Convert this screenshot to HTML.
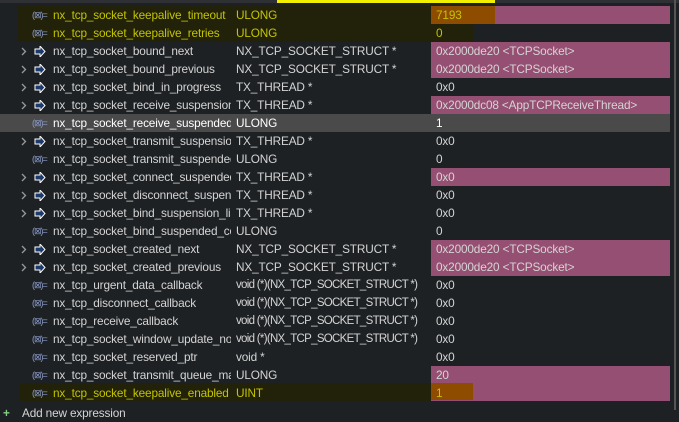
<!DOCTYPE html>
<html><head><meta charset="utf-8"><style>
body{margin:0;width:679px;height:410px;background:#1e2124;overflow:hidden;position:relative;font-family:"Liberation Sans",sans-serif;font-size:11.8px;letter-spacing:-0.15px;color:#d4d4d4}
.a{position:absolute}
.r{position:absolute;left:0;width:670px;height:18px;line-height:18px}
.n{position:absolute;left:53px;width:178px;overflow:hidden;white-space:nowrap}
.t{position:absolute;left:236px;white-space:nowrap;width:192px;overflow:hidden}
.v{position:absolute;left:436px;white-space:nowrap}
.c{position:absolute;left:21px;top:5px}
.ip{position:absolute;left:34px;top:4px}
.iv{position:absolute;left:32px;top:0;font-size:9px;color:#8a9ac8;letter-spacing:-1px}
.y{color:#c4c400}
.vd{letter-spacing:-0.7px;font-size:11.5px}
</style></head><body>
<div class="a" style="left:0;top:0;width:679px;height:3px;background:#2f3033"></div>
<div class="a" style="left:277px;top:0;width:218px;height:3px;background:#f0f000"></div>
<div class="a" style="left:674px;top:0;width:2px;height:410px;background:#555"></div>
<div class="a" style="left:431px;top:6px;width:239px;height:18px;background:#954f72"></div>
<div class="a" style="left:431px;top:42px;width:239px;height:36px;background:#954f72"></div>
<div class="a" style="left:431px;top:96px;width:239px;height:18px;background:#954f72"></div>
<div class="a" style="left:431px;top:168px;width:239px;height:18px;background:#954f72"></div>
<div class="a" style="left:431px;top:240px;width:239px;height:36px;background:#954f72"></div>
<div class="a" style="left:431px;top:366px;width:239px;height:35px;background:#954f72"></div>
<div class="a" style="left:0;top:114px;width:670px;height:18px;background:#4a4a4a"></div>
<div class="a" style="left:18px;top:6px;width:413px;height:36px;background:#22220a"></div>
<div class="a" style="left:431px;top:24px;width:42px;height:18px;background:#22220a"></div>
<div class="a" style="left:431px;top:6px;width:64px;height:18px;background:#8e4c00"></div>
<div class="a" style="left:20px;top:383px;width:411px;height:18px;background:#22220a"></div>
<div class="a" style="left:431px;top:383px;width:42px;height:17px;background:#8e4c00"></div>

<div class="r" style="top:6px"><span class="iv">(⊠)=</span><span class="n y">nx_tcp_socket_keepalive_timeout</span><span class="t y">ULONG</span><span class="v y">7193</span></div>
<div class="r" style="top:24px"><span class="iv">(⊠)=</span><span class="n y">nx_tcp_socket_keepalive_retries</span><span class="t y">ULONG</span><span class="v y">0</span></div>
<div class="r" style="top:42px"><svg class="c" width="6" height="9"><path d="M1 1l3.5 3.5L1 8" fill="none" stroke="#999" stroke-width="1.3"/></svg><svg class="ip" width="12" height="11"><path d="M1 3h5V0l5 5.5-5 5.5V8H1z" fill="#1e3a6a" stroke="#fff"/></svg><span class="n">nx_tcp_socket_bound_next</span><span class="t">NX_TCP_SOCKET_STRUCT *</span><span class="v">0x2000de20 &lt;TCPSocket&gt;</span></div>
<div class="r" style="top:60px"><svg class="c" width="6" height="9"><path d="M1 1l3.5 3.5L1 8" fill="none" stroke="#999" stroke-width="1.3"/></svg><svg class="ip" width="12" height="11"><path d="M1 3h5V0l5 5.5-5 5.5V8H1z" fill="#1e3a6a" stroke="#fff"/></svg><span class="n">nx_tcp_socket_bound_previous</span><span class="t">NX_TCP_SOCKET_STRUCT *</span><span class="v">0x2000de20 &lt;TCPSocket&gt;</span></div>
<div class="r" style="top:78px"><svg class="c" width="6" height="9"><path d="M1 1l3.5 3.5L1 8" fill="none" stroke="#999" stroke-width="1.3"/></svg><svg class="ip" width="12" height="11"><path d="M1 3h5V0l5 5.5-5 5.5V8H1z" fill="#1e3a6a" stroke="#fff"/></svg><span class="n">nx_tcp_socket_bind_in_progress</span><span class="t">TX_THREAD *</span><span class="v">0x0</span></div>
<div class="r" style="top:96px"><svg class="c" width="6" height="9"><path d="M1 1l3.5 3.5L1 8" fill="none" stroke="#999" stroke-width="1.3"/></svg><svg class="ip" width="12" height="11"><path d="M1 3h5V0l5 5.5-5 5.5V8H1z" fill="#1e3a6a" stroke="#fff"/></svg><span class="n">nx_tcp_socket_receive_suspension_list</span><span class="t">TX_THREAD *</span><span class="v">0x2000dc08 &lt;AppTCPReceiveThread&gt;</span></div>
<div class="r" style="top:114px;color:#fff"><span class="iv">(⊠)=</span><span class="n">nx_tcp_socket_receive_suspended</span><span class="t">ULONG</span><span class="v">1</span></div>
<div class="r" style="top:132px"><svg class="c" width="6" height="9"><path d="M1 1l3.5 3.5L1 8" fill="none" stroke="#999" stroke-width="1.3"/></svg><svg class="ip" width="12" height="11"><path d="M1 3h5V0l5 5.5-5 5.5V8H1z" fill="#1e3a6a" stroke="#fff"/></svg><span class="n">nx_tcp_socket_transmit_suspension_list</span><span class="t">TX_THREAD *</span><span class="v">0x0</span></div>
<div class="r" style="top:150px"><span class="iv">(⊠)=</span><span class="n">nx_tcp_socket_transmit_suspended</span><span class="t">ULONG</span><span class="v">0</span></div>
<div class="r" style="top:168px"><svg class="c" width="6" height="9"><path d="M1 1l3.5 3.5L1 8" fill="none" stroke="#999" stroke-width="1.3"/></svg><svg class="ip" width="12" height="11"><path d="M1 3h5V0l5 5.5-5 5.5V8H1z" fill="#1e3a6a" stroke="#fff"/></svg><span class="n">nx_tcp_socket_connect_suspended_thread</span><span class="t">TX_THREAD *</span><span class="v">0x0</span></div>
<div class="r" style="top:186px"><svg class="c" width="6" height="9"><path d="M1 1l3.5 3.5L1 8" fill="none" stroke="#999" stroke-width="1.3"/></svg><svg class="ip" width="12" height="11"><path d="M1 3h5V0l5 5.5-5 5.5V8H1z" fill="#1e3a6a" stroke="#fff"/></svg><span class="n">nx_tcp_socket_disconnect_suspended</span><span class="t">TX_THREAD *</span><span class="v">0x0</span></div>
<div class="r" style="top:204px"><svg class="c" width="6" height="9"><path d="M1 1l3.5 3.5L1 8" fill="none" stroke="#999" stroke-width="1.3"/></svg><svg class="ip" width="12" height="11"><path d="M1 3h5V0l5 5.5-5 5.5V8H1z" fill="#1e3a6a" stroke="#fff"/></svg><span class="n">nx_tcp_socket_bind_suspension_list</span><span class="t">TX_THREAD *</span><span class="v">0x0</span></div>
<div class="r" style="top:222px"><span class="iv">(⊠)=</span><span class="n">nx_tcp_socket_bind_suspended_count</span><span class="t">ULONG</span><span class="v">0</span></div>
<div class="r" style="top:240px"><svg class="c" width="6" height="9"><path d="M1 1l3.5 3.5L1 8" fill="none" stroke="#999" stroke-width="1.3"/></svg><svg class="ip" width="12" height="11"><path d="M1 3h5V0l5 5.5-5 5.5V8H1z" fill="#1e3a6a" stroke="#fff"/></svg><span class="n">nx_tcp_socket_created_next</span><span class="t">NX_TCP_SOCKET_STRUCT *</span><span class="v">0x2000de20 &lt;TCPSocket&gt;</span></div>
<div class="r" style="top:258px"><svg class="c" width="6" height="9"><path d="M1 1l3.5 3.5L1 8" fill="none" stroke="#999" stroke-width="1.3"/></svg><svg class="ip" width="12" height="11"><path d="M1 3h5V0l5 5.5-5 5.5V8H1z" fill="#1e3a6a" stroke="#fff"/></svg><span class="n">nx_tcp_socket_created_previous</span><span class="t">NX_TCP_SOCKET_STRUCT *</span><span class="v">0x2000de20 &lt;TCPSocket&gt;</span></div>
<div class="r" style="top:276px"><span class="iv">(⊠)=</span><span class="n">nx_tcp_urgent_data_callback</span><span class="t vd">void (*)(NX_TCP_SOCKET_STRUCT *)</span><span class="v">0x0</span></div>
<div class="r" style="top:294px"><span class="iv">(⊠)=</span><span class="n">nx_tcp_disconnect_callback</span><span class="t vd">void (*)(NX_TCP_SOCKET_STRUCT *)</span><span class="v">0x0</span></div>
<div class="r" style="top:312px"><span class="iv">(⊠)=</span><span class="n">nx_tcp_receive_callback</span><span class="t vd">void (*)(NX_TCP_SOCKET_STRUCT *)</span><span class="v">0x0</span></div>
<div class="r" style="top:330px"><span class="iv">(⊠)=</span><span class="n">nx_tcp_socket_window_update_notify</span><span class="t vd">void (*)(NX_TCP_SOCKET_STRUCT *)</span><span class="v">0x0</span></div>
<div class="r" style="top:348px"><span class="iv">(⊠)=</span><span class="n">nx_tcp_socket_reserved_ptr</span><span class="t">void *</span><span class="v">0x0</span></div>
<div class="r" style="top:366px"><span class="iv">(⊠)=</span><span class="n">nx_tcp_socket_transmit_queue_maximum</span><span class="t">ULONG</span><span class="v">20</span></div>
<div class="r" style="top:384px"><span class="iv">(⊠)=</span><span class="n y">nx_tcp_socket_keepalive_enabled</span><span class="t y">UINT</span><span class="v y">1</span></div>
<div class="r" style="top:404px"><span class="a" style="left:3px;color:#8c8;font-weight:bold">+</span><span class="a" style="left:22px">Add new expression</span></div>
</body></html>
